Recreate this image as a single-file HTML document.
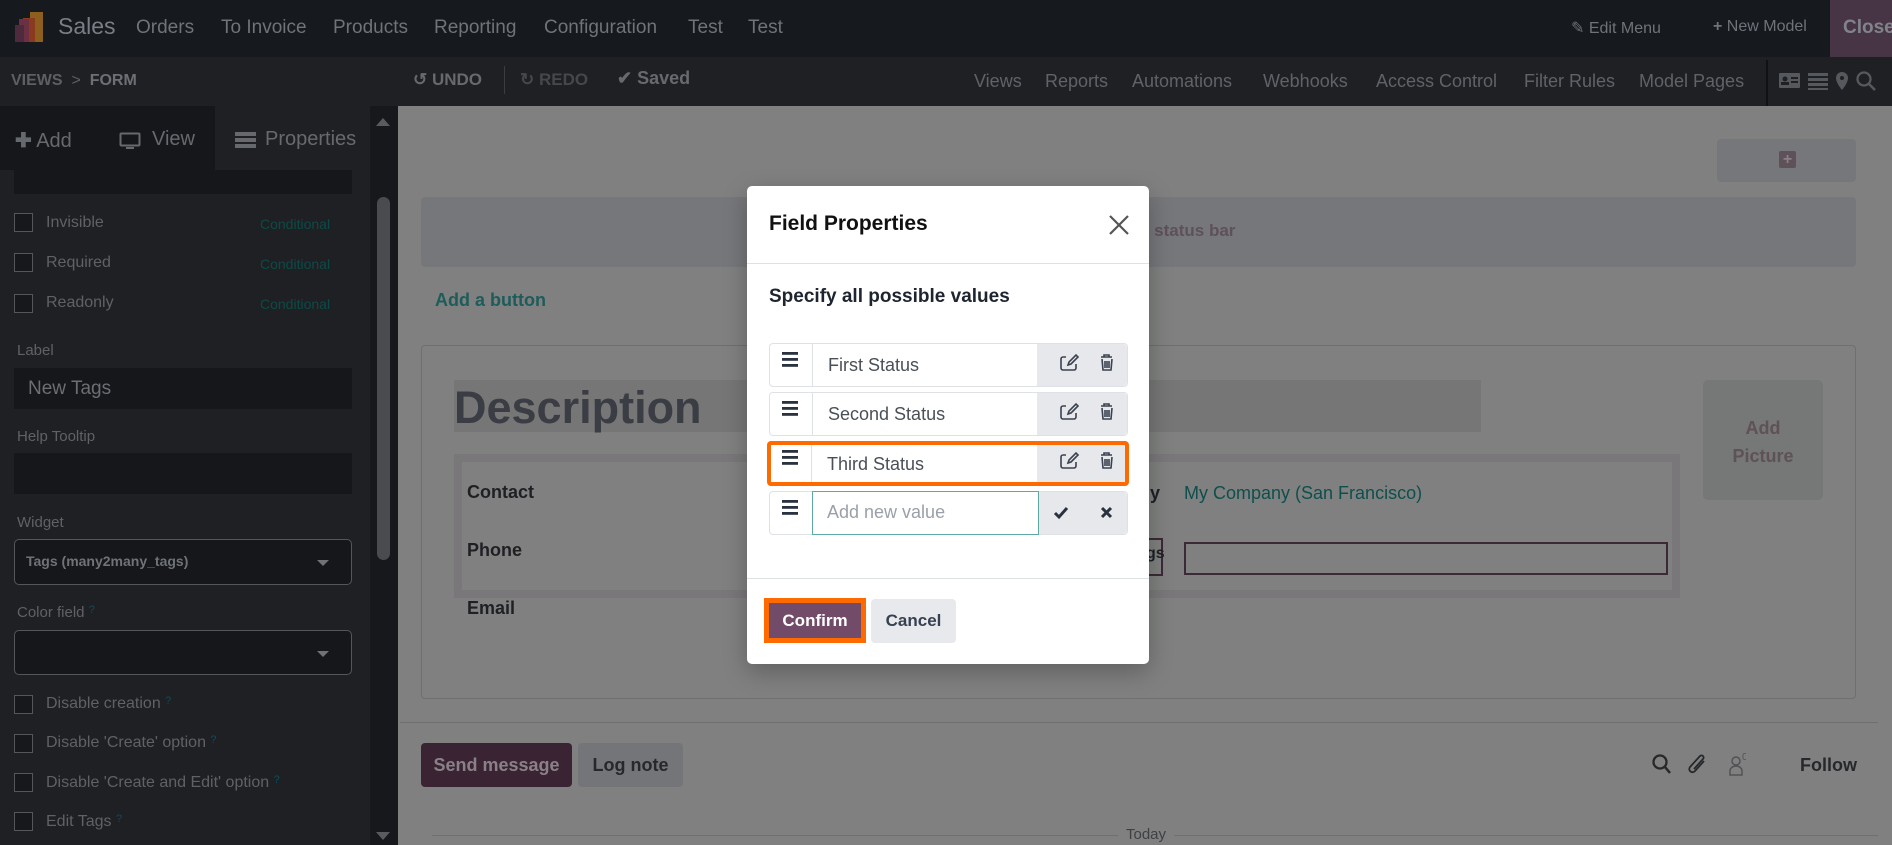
<!DOCTYPE html>
<html><head><meta charset="utf-8"><style>
*{box-sizing:border-box;margin:0;padding:0}
body{width:1892px;height:845px;overflow:hidden;position:relative;background:#7f807f;font-family:"Liberation Sans",sans-serif}
.a{position:absolute;white-space:nowrap}
.nav{color:#6f737a;font-size:19px}
.sb{color:#5f6166;font-size:16px}
.cb{position:absolute;left:14px;width:19px;height:19px;border:1.5px solid #54565b;background:#16181c}
.cond{color:#0b4a48;font-size:14px}
.q{color:#104a5c;font-size:11px;vertical-align:top}
.row{position:absolute;left:769px;width:359px;height:44px;border:1px solid #dee2e6;border-radius:4px;background:#fff}
.row .h{position:absolute;left:0;top:0;width:43px;height:42px;border-right:1px solid #dee2e6}
.row .t{position:absolute;left:58px;top:11px;font-size:18px;color:#495057}
.row .act{position:absolute;right:0;top:0;width:90px;height:42px;background:#e7e8ec;border-radius:0 4px 4px 0}
</style></head><body>
<!-- top nav -->
<div class="a" style="left:0;top:0;width:1892px;height:57px;background:#16191e"></div>
<svg class="a" style="left:14px;top:11px" width="32" height="32" viewBox="0 0 32 32">
<rect x="16" y="1" width="13" height="30" fill="#8c5f1f"/><rect x="9" y="7" width="12" height="24" fill="#8a3a1f"/><rect x="5" y="8" width="10" height="23" fill="#6c3044"/><rect x="1" y="14" width="9" height="17" fill="#4d2a3c"/></svg>
<div class="a" style="left:58px;top:13px;font-size:23px;color:#7a7e85">Sales</div>
<div class="a nav" style="left:136px;top:17px">Orders</div>
<div class="a nav" style="left:221px;top:17px">To Invoice</div>
<div class="a nav" style="left:333px;top:17px">Products</div>
<div class="a nav" style="left:434px;top:17px">Reporting</div>
<div class="a nav" style="left:544px;top:17px">Configuration</div>
<div class="a nav" style="left:688px;top:17px">Test</div>
<div class="a nav" style="left:748px;top:17px">Test</div>
<div class="a" style="left:1571px;top:18px;font-size:16px;color:#6f737a">✎ Edit Menu</div>
<div class="a" style="left:1713px;top:18px;font-size:16px;color:#6f737a"><b>+</b> New Model</div>
<div class="a" style="left:1830px;top:0;width:62px;height:57px;background:#473445"></div>
<div class="a" style="left:1843px;top:17px;font-size:19px;color:#80848a;font-weight:bold">Close</div>
<!-- second bar -->
<div class="a" style="left:0;top:57px;width:1892px;height:49px;background:#1f2024"></div>
<div class="a" style="left:11px;top:72px;font-size:16px;color:#5c5f64;font-weight:bold">VIEWS <span style="font-weight:normal">&nbsp;&gt;&nbsp;</span> <span style="color:#6c6f75">FORM</span></div>
<div class="a" style="left:413px;top:70px;font-size:17px;color:#66696e;font-weight:bold">↺ UNDO</div>
<div class="a" style="left:504px;top:66px;width:1px;height:28px;background:#3a3c40"></div>
<div class="a" style="left:520px;top:70px;font-size:17px;color:#45474b;font-weight:bold">↻ REDO</div>
<div class="a" style="left:617px;top:68px;font-size:18px;color:#66696e;font-weight:bold">✔ Saved</div>
<div class="a nav" style="left:974px;top:71px;font-size:18px;color:#5f6268">Views</div>
<div class="a nav" style="left:1045px;top:71px;font-size:18px;color:#5f6268">Reports</div>
<div class="a nav" style="left:1132px;top:71px;font-size:18px;color:#5f6268">Automations</div>
<div class="a nav" style="left:1263px;top:71px;font-size:18px;color:#5f6268">Webhooks</div>
<div class="a nav" style="left:1376px;top:71px;font-size:18px;color:#5f6268">Access Control</div>
<div class="a nav" style="left:1524px;top:71px;font-size:18px;color:#5f6268">Filter Rules</div>
<div class="a nav" style="left:1639px;top:71px;font-size:18px;color:#5f6268">Model Pages</div>
<div class="a" style="left:1766px;top:60px;width:2px;height:46px;background:#101114"></div>
<svg class="a" style="left:1778px;top:70px" width="105" height="22" viewBox="0 0 105 22">
<rect x="1" y="3" width="21" height="15" rx="1" fill="#55585d"/><circle cx="7" cy="9" r="2.5" fill="#1f2024"/><rect x="3" y="12" width="8" height="3" fill="#1f2024"/><rect x="13" y="7" width="7" height="2" fill="#1f2024"/><rect x="13" y="11" width="7" height="2" fill="#1f2024"/>
<g fill="#55585d"><rect x="30" y="3" width="20" height="3"/><rect x="30" y="8" width="20" height="3"/><rect x="30" y="13" width="20" height="3"/><rect x="30" y="18" width="20" height="2"/></g>
<path d="M64 2a6 6 0 0 1 6 6c0 5-6 12-6 12s-6-7-6-12a6 6 0 0 1 6-6z" fill="#55585d"/><circle cx="64" cy="8" r="2" fill="#1f2024"/>
<circle cx="86" cy="9" r="6.5" fill="none" stroke="#55585d" stroke-width="2.3"/><line x1="91" y1="14" x2="97" y2="20" stroke="#55585d" stroke-width="2.5"/></svg>
<!-- sidebar -->
<div class="a" style="left:0;top:106px;width:398px;height:739px;background:#1f2024"></div>
<div class="a" style="left:0;top:106px;width:215px;height:64px;background:#15171b"></div>
<div class="a" style="left:370px;top:106px;width:28px;height:739px;background:#17181b"></div>
<div class="a" style="left:377px;top:197px;width:13px;height:363px;border-radius:7px;background:#4a4b4e"></div>
<div class="a" style="left:376px;top:118px;border:7px solid transparent;border-bottom:8px solid #5a5b5e;border-top:0"></div>
<div class="a" style="left:376px;top:832px;border:7px solid transparent;border-top:8px solid #5a5b5e;border-bottom:0"></div>
<div class="a" style="left:15px;top:128px;font-size:20px;color:#66696e"><b>✚</b> Add</div>
<svg class="a" style="left:119px;top:132px" width="22" height="19"><rect x="1.5" y="1.5" width="19" height="12" rx="1" fill="none" stroke="#66696e" stroke-width="2"/><rect x="7" y="15" width="8" height="2" fill="#66696e"/></svg>
<div class="a" style="left:152px;top:128px;font-size:20px;color:#66696e">View</div>
<svg class="a" style="left:235px;top:132px" width="21" height="16"><g fill="#66696e"><rect y="0" width="21" height="4"/><rect y="6" width="21" height="4"/><rect y="12" width="21" height="4"/></g></svg>
<div class="a" style="left:265px;top:128px;font-size:20px;color:#66696e">Properties</div>
<div class="a" style="left:14px;top:170px;width:338px;height:24px;background:#15171b"></div>
<div class="cb" style="top:213px"></div><div class="a sb" style="left:46px;top:214px">Invisible</div><div class="a cond" style="left:260px;top:216px">Conditional</div>
<div class="cb" style="top:253px"></div><div class="a sb" style="left:46px;top:254px">Required</div><div class="a cond" style="left:260px;top:256px">Conditional</div>
<div class="cb" style="top:294px"></div><div class="a sb" style="left:46px;top:294px">Readonly</div><div class="a cond" style="left:260px;top:296px">Conditional</div>
<div class="a sb" style="left:17px;top:342px;font-size:15px">Label</div>
<div class="a" style="left:14px;top:368px;width:338px;height:41px;background:#15171b"></div>
<div class="a" style="left:28px;top:378px;font-size:19px;color:#6b6e73">New Tags</div>
<div class="a sb" style="left:17px;top:428px;font-size:15px">Help Tooltip</div>
<div class="a" style="left:14px;top:453px;width:338px;height:41px;background:#15171b"></div>
<div class="a sb" style="left:17px;top:514px;font-size:15px">Widget</div>
<div class="a" style="left:14px;top:539px;width:338px;height:46px;background:#15171b;border:1px solid #54565b;border-radius:5px"></div>
<div class="a" style="left:26px;top:553px;font-size:14px;color:#6f7277;font-weight:bold">Tags (many2many_tags)</div>
<div class="a" style="left:317px;top:560px;border:6px solid transparent;border-top:6px solid #6f7277;border-bottom:0"></div>
<div class="a sb" style="left:17px;top:604px;font-size:15px">Color field <span class="q">?</span></div>
<div class="a" style="left:14px;top:630px;width:338px;height:45px;background:#15171b;border:1px solid #54565b;border-radius:5px"></div>
<div class="a" style="left:317px;top:651px;border:6px solid transparent;border-top:6px solid #6f7277;border-bottom:0"></div>
<div class="cb" style="top:695px"></div><div class="a sb" style="left:46px;top:695px">Disable creation <span class="q">?</span></div>
<div class="cb" style="top:734px"></div><div class="a sb" style="left:46px;top:734px">Disable 'Create' option <span class="q">?</span></div>
<div class="cb" style="top:773px"></div><div class="a sb" style="left:46px;top:774px">Disable 'Create and Edit' option <span class="q">?</span></div>
<div class="cb" style="top:812px"></div><div class="a sb" style="left:46px;top:813px">Edit Tags <span class="q">?</span></div>
<!-- main (dimmed) -->
<div class="a" style="left:1717px;top:139px;width:139px;height:43px;background:#76777a;border-radius:4px"></div>
<div class="a" style="left:1779px;top:151px;width:17px;height:17px;background:#5e5158;border-radius:2px;color:#8a8088;font-size:16px;line-height:17px;text-align:center;font-weight:bold">+</div>
<div class="a" style="left:421px;top:197px;width:1435px;height:70px;background:#76777a;border-radius:4px"></div>
<div class="a" style="left:1140px;top:221px;font-size:17px;color:#5e5158;font-weight:bold">e status bar</div>
<div class="a" style="left:435px;top:290px;font-size:18px;color:#1d5c5a;font-weight:bold">Add a button</div>
<div class="a" style="left:421px;top:345px;width:1435px;height:354px;border:1px solid #6e6f6f;border-radius:4px"></div>
<div class="a" style="left:454px;top:380px;width:1027px;height:52px;background:#767676"></div>
<div class="a" style="left:454px;top:382px;font-size:45px;color:#3a3d44;font-weight:bold">Description</div>
<div class="a" style="left:454px;top:454px;width:1226px;height:144px;border:8px solid #7a777a"></div>
<div class="a" style="left:467px;top:482px;font-size:18px;color:#1e2024;font-weight:bold">Contact</div>
<div class="a" style="left:467px;top:540px;font-size:18px;color:#1e2024;font-weight:bold">Phone</div>
<div class="a" style="left:467px;top:598px;font-size:18px;color:#1e2024;font-weight:bold">Email</div>
<div class="a" style="left:1150px;top:483px;font-size:18px;color:#1e2024;font-weight:bold">y</div>
<div class="a" style="left:1184px;top:483px;font-size:18px;color:#0e4f4d">My Company (San Francisco)</div>
<div class="a" style="left:1140px;top:538px;width:23px;height:38px;border:2px solid #3b2a35;border-left:0"></div>
<div class="a" style="left:1146px;top:545px;font-size:16px;color:#1e2024;font-weight:bold">gs</div>
<div class="a" style="left:1184px;top:542px;width:484px;height:33px;border:2px solid #3b2a35"></div>
<div class="a" style="left:1703px;top:380px;width:120px;height:120px;background:#767777;border-radius:5px"></div>
<div class="a" style="left:1703px;top:414px;width:120px;text-align:center;font-size:18px;line-height:28px;color:#5e5158;font-weight:bold;white-space:normal">Add<br>Picture</div>
<div class="a" style="left:400px;top:722px;width:1478px;height:1px;background:#6e6f6f"></div>
<div class="a" style="left:421px;top:743px;width:151px;height:44px;background:#3a2434;border-radius:4px;color:#8a8088;font-size:18px;line-height:44px;text-align:center;font-weight:bold">Send message</div>
<div class="a" style="left:578px;top:743px;width:105px;height:44px;background:#747578;border-radius:4px;color:#26282c;font-size:18px;line-height:44px;text-align:center;font-weight:bold">Log note</div>
<svg class="a" style="left:1651px;top:753px" width="95" height="24" viewBox="0 0 95 24"><circle cx="9" cy="9" r="6.5" fill="none" stroke="#26282c" stroke-width="2.3"/><line x1="14" y1="14" x2="19" y2="20" stroke="#26282c" stroke-width="2.5"/>
<path d="M53 8 l-9 10 a3 3 0 0 1-5-4 l10-11 a2 2 0 0 1 3 3 l-9 10" fill="none" stroke="#26282c" stroke-width="1.8"/>
<circle cx="85" cy="8" r="4" fill="none" stroke="#505256" stroke-width="1.5"/><path d="M79 22v-4a6 5 0 0 1 12 0v4z" fill="none" stroke="#505256" stroke-width="1.5"/><text x="91" y="7" font-size="10" fill="#505256" font-family="Liberation Sans">0</text></svg>
<div class="a" style="left:1800px;top:755px;font-size:18px;color:#26282c;font-weight:bold">Follow</div>
<div class="a" style="left:432px;top:835px;width:1446px;height:1px;background:#6e6f6f"></div>
<div class="a" style="left:1118px;top:826px;padding:0 8px;background:#7f807f;font-size:15px;color:#3e4045">Today</div>
<!-- modal -->
<div class="a" style="left:747px;top:186px;width:402px;height:478px;background:#fff;border-radius:5px;box-shadow:0 8px 24px rgba(0,0,0,.25)"></div>
<div class="a" style="left:769px;top:212px;font-size:21px;color:#111;font-weight:bold">Field Properties</div>
<svg class="a" style="left:1108px;top:214px" width="22" height="22"><path d="M2 2L20 20M20 2L2 20" stroke="#555" stroke-width="2.2"/></svg>
<div class="a" style="left:747px;top:263px;width:402px;height:1px;background:#dee2e6"></div>
<div class="a" style="left:769px;top:286px;font-size:19px;color:#1e2530;font-weight:bold">Specify all possible values</div>
<div class="row" style="top:343px"><div class="h"></div><div class="t">First Status</div><div class="act"></div></div>
<div class="row" style="top:392px"><div class="h"></div><div class="t">Second Status</div><div class="act"></div></div>
<div class="row" style="top:441px;height:45px;border:4px solid #ff6a00;left:767px;width:362px"><div class="h" style="height:37px;width:41px"></div><div class="t" style="top:9px;left:56px">Third Status</div><div class="act" style="height:37px;width:88px;border-radius:0"></div></div>
<div class="row" style="top:491px"><div class="h"></div><div class="act"></div></div>
<div class="a" style="left:812px;top:491px;width:227px;height:44px;border:1px solid #5fa9a5;background:#fff"></div>
<div class="a" style="left:827px;top:502px;font-size:18px;color:#9aa0a8">Add new value</div>
<svg class="a" style="left:780px;top:0" width="380" height="560" viewBox="780 0 380 560">
<g fill="#2a3240"><rect x="782" y="352" width="16" height="2.8"/><rect x="782" y="358" width="16" height="2.8"/><rect x="782" y="364" width="16" height="2.8"/>
<rect x="782" y="401" width="16" height="2.8"/><rect x="782" y="407" width="16" height="2.8"/><rect x="782" y="413" width="16" height="2.8"/>
<rect x="782" y="450" width="16" height="2.8"/><rect x="782" y="456" width="16" height="2.8"/><rect x="782" y="462" width="16" height="2.8"/>
<rect x="782" y="500" width="16" height="2.8"/><rect x="782" y="506" width="16" height="2.8"/><rect x="782" y="512" width="16" height="2.8"/></g>
<g fill="none" stroke="#3a4250" stroke-width="1.6">
<g id="e"><path d="M1066 357h-3a2 2 0 0 0-2 2v9a2 2 0 0 0 2 2h11a2 2 0 0 0 2-2v-4"/><path d="M1068 365l1 -3l7-7l2 2l-7 7z"/></g>
<use href="#e" y="49"/><use href="#e" y="98"/>
<g id="t"><path d="M1101 357h11M1104 357v-2h5v2M1102 359l1 11h8l1-11M1105 361v7M1107 361v7M1109 361v7"/></g>
<use href="#t" y="49"/><use href="#t" y="98"/></g>
<path d="M1055 513l4 4l8-9" fill="none" stroke="#2a3240" stroke-width="3"/>
<path d="M1102 508l9 9M1111 508l-9 9" stroke="#2a3240" stroke-width="3"/>
</svg>
<div class="a" style="left:747px;top:578px;width:402px;height:1px;background:#dee2e6"></div>
<div class="a" style="left:764px;top:598px;width:102px;height:45px;border:5px solid #ff6a00;background:#714b67;color:#fff;font-size:17px;font-weight:bold;text-align:center;line-height:35px">Confirm</div>
<div class="a" style="left:871px;top:599px;width:85px;height:44px;background:#e7e9ed;border-radius:4px;color:#374151;font-size:17px;font-weight:bold;text-align:center;line-height:44px">Cancel</div>
</body></html>
